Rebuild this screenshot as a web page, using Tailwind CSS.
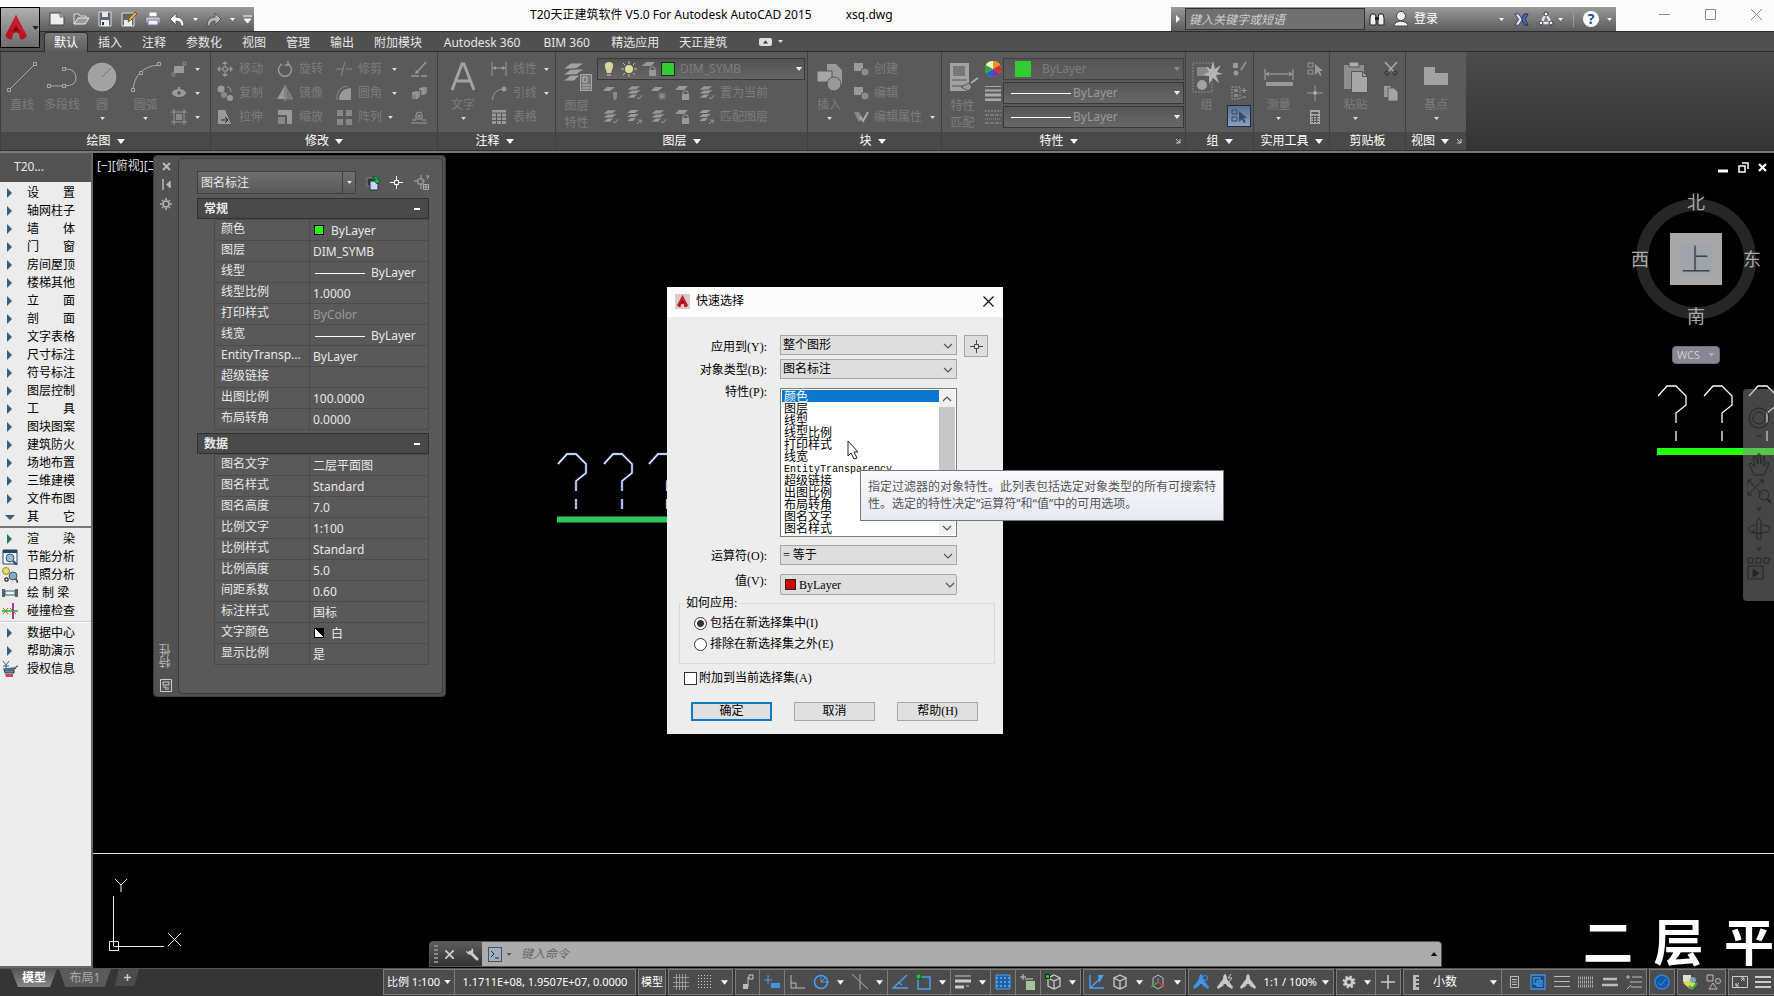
<!DOCTYPE html>
<html lang="zh-CN">
<head>
    <meta charset="UTF-8">
    <meta name="viewport" content="width=device-width, initial-scale=1.0">
    <title>T20天正建筑软件 V5.0 For Autodesk AutoCAD 2015</title>
    <script src="https://cdn.jsdelivr.net/npm/@tailwindcss/browser@4"></script>
</head>
<body class="flex flex-col h-screen overflow-hidden bg-black font-['Noto_Sans','Noto_Sans_CJK_SC',sans-serif] text-xs leading-4 text-[#e6e6e6] whitespace-nowrap">
    <!-- Shared icons -->
    <svg class="hidden">
        <symbol id="dn" viewBox="0 0 8 5"><path d="M0 0h8L4 5z" fill="currentColor"/></symbol>
        <symbol id="logo" viewBox="0 0 24 26"><path d="M12 0 1 21q5 5 7 3l1-5q3-3 6 0l1 5q3 2 7-3z" fill="#b81420"/><path d="M12 0 6 15l6-5 10 11z" fill="#c82028"/><path d="M12 11l-3 6q3-2 6 0z" fill="#6e0a10"/></symbol>
        <symbol id="chev" viewBox="0 0 10 6"><path d="M1 1l4 4 4-4" fill="none" stroke="#555" stroke-width="1.2"/></symbol>
        <symbol id="new" viewBox="0 0 16 16"><path d="M1 2h10l4 4v8H1z" fill="#eee" stroke="#444"/><path d="M11 2v4h4" fill="#bbb" stroke="#666"/></symbol>
        <symbol id="open" viewBox="0 0 16 16"><path d="M1 13V3h5l1 2h6v2" fill="#777" stroke="#ddd"/><path d="M1 13 5 7h11l-4 6z" fill="#999" stroke="#eee"/></symbol>
        <symbol id="save" viewBox="0 0 16 16"><path d="M2 1h12v14H2z" fill="#5c6470" stroke="#ddd"/><path d="M5 1h6v5H5z" fill="#e6e6e6"/><path d="M4 9h8v6H4z" fill="#eee"/><path d="M5 11h2v3H5z" fill="#333"/></symbol>
        <symbol id="saveas" viewBox="0 0 16 16"><path d="M1 2h12v13H1z" fill="#666" stroke="#ddd"/><path d="M3 9h8v6H3z" fill="#eee"/><path d="M7 11l1-4 6-6 2 2-6 6z" fill="#e5a93c" stroke="#553a10" stroke-width=".7"/></symbol>
        <symbol id="print" viewBox="0 0 16 16"><path d="M4 1h8v5H4z" fill="#fff" stroke="#888"/><path d="M1 6h14v6H1z" fill="#ccd" stroke="#777"/><path d="M3 9h10v5H3z" fill="#eef" stroke="#779"/></symbol>
        <symbol id="undo" viewBox="0 0 16 16"><path d="M7 2v4q8 0 8 9h-3q0-5-5-5v4L1 8z" fill="currentColor" stroke="#444" stroke-width=".8"/></symbol>
        <symbol id="rect" viewBox="0 0 16 16"><path d="M3 5h10v7H3z" fill="#999"/><path d="M12 1h3v3h-3zM1 12h3v3H1z" fill="none" stroke="#888"/></symbol>
        <symbol id="ellipse" viewBox="0 0 16 16"><ellipse cx="8" cy="8" rx="7" ry="4" fill="#999"/><path d="M8 6v4M6 8h4" stroke="#444"/><path d="M7 2h2v2H7z" fill="#999"/></symbol>
        <symbol id="hatch" viewBox="0 0 16 16"><path d="M5 5h6v6H5z" fill="#888"/><path d="M3 0v16M13 0v16M0 3h16M0 13h16" stroke="#999"/></symbol>
        <symbol id="move" viewBox="0 0 16 16"><path d="M8 0l3 3H5zM8 16l3-3H5zM0 8l3-3v6zM16 8l-3-3v6z" fill="#999"/><path d="M8 3v3M8 10v3M3 8h3M10 8h3M6 6h4v4H6z" stroke="#999" fill="none"/></symbol>
        <symbol id="copy" viewBox="0 0 16 16"><circle cx="4" cy="4" r="3.5" fill="#999"/><circle cx="7" cy="10" r="3" fill="#888"/><circle cx="13" cy="13" r="3" fill="#999"/><path d="M10 2q4 0 4 5" stroke="#999" fill="none"/></symbol>
        <symbol id="stretch" viewBox="0 0 16 16"><path d="M1 1h7l6 14H1z" fill="#999"/><path d="M4 11h7M8 8l3 3-3 3" stroke="#222" fill="none"/></symbol>
        <symbol id="rotate" viewBox="0 0 16 16"><path d="M5 3a6.500 6.500 0 1 0 6 0M11 0v4H8" stroke="#999" stroke-width="1.500" fill="none"/></symbol>
        <symbol id="mirror" viewBox="0 0 16 16"><path d="M7 2v12H0z" fill="#999"/><path d="M9 2v12h7z" fill="#777" stroke="#999" stroke-width=".5"/><path d="M8 0v16" stroke="#aaa"/></symbol>
        <symbol id="scale" viewBox="0 0 16 16"><path d="M1 1h14v14h-5V6H1z" fill="#999"/><path d="M1 8h7v7H1z" fill="#888"/></symbol>
        <symbol id="trim" viewBox="0 0 16 16"><path d="M0 8h7M10 8h6M9 1 5 15" stroke="#888" fill="none"/></symbol>
        <symbol id="fillet" viewBox="0 0 16 16"><path d="M3 15Q3 4 15 3v12z" fill="#999"/><path d="M1 15Q0 2 12 1" stroke="#888" fill="none"/></symbol>
        <symbol id="array" viewBox="0 0 16 16"><path d="M1 1h6v6H1zM10 1h6v6h-6zM1 10h6v6H1zM10 10h6v6h-6z" fill="#888"/></symbol>
        <symbol id="pencil" viewBox="0 0 16 16"><path d="M0 15h8M10 15h6M15 1 6 11" stroke="#999" stroke-width="1.500"/><path d="M4 13l1-4 3 3z" fill="#999"/></symbol>
        <symbol id="cubes" viewBox="0 0 16 16"><path d="M1 8l3-2h5v6l-3 2H1zM8 4l3-2h5v6l-3 2h-3V6z" fill="#888"/><path d="M1 8h5v6M8 4h5v6" stroke="#bbb" stroke-width=".6" fill="none"/></symbol>
        <symbol id="offset" viewBox="0 0 16 16"><path d="M0 14h16M1 11h4V6a3 3 0 0 1 6 0v5h4M7 11V6h2v5" stroke="#999" fill="none"/></symbol>
        <symbol id="dim" viewBox="0 0 16 16"><path d="M1 1v14M15 1v14M2 7h12" stroke="#999"/><path d="M1 7l4-2v4zM15 7l-4-2v4z" fill="#999"/></symbol>
        <symbol id="leader" viewBox="0 0 16 16"><path d="M1 15Q3 5 11 4" stroke="#999" fill="none"/><circle cx="13" cy="4" r="2.500" fill="#999"/></symbol>
        <symbol id="grid" viewBox="0 0 16 16"><path d="M1 1h14v14H1z" fill="#999"/><path d="M1 4h14M1 8h14M1 11.500h14M5.500 4v11M10.500 4v11" stroke="#555"/></symbol>
        <symbol id="lay" viewBox="0 0 16 16"><path d="M6 1h9l-5 4H1zM6 5h9l-5 4H1zM6 9h6l-4 4H1z" fill="#9a9a9a" stroke="#555" stroke-width=".6"/><path d="M11 12l2 2 3-4" stroke="#999" fill="none"/></symbol>
        <symbol id="layx" viewBox="0 0 16 16"><path d="M5 1h8L9 4H1zM5 5h8L9 8H1zM5 9h5l-3 3H1z" fill="#9a9a9a"/><path d="M11 15l4-4M12 11h3v3" stroke="#999" fill="none"/></symbol>
        <symbol id="lay1" viewBox="0 0 16 16"><path d="M5 2h8L8 6H1z" fill="#999"/><path d="M11 7h4v4l-1 4h-2l-1-4z" fill="#8a8a8a"/></symbol>
        <symbol id="frz" viewBox="0 0 16 16"><path d="M5 2h8L8 6H1z" fill="#999"/><path d="M12 7v8M8 11h8M9 8l6 6M15 8l-6 6" stroke="#999"/></symbol>
        <symbol id="lock" viewBox="0 0 16 16"><path d="M5 1h9l-4 4H1z" fill="#999"/><path d="M8 9h7v6H8z" fill="#999"/><path d="M9 9V7q2-3 5 0v2" stroke="#999" fill="none"/></symbol>
        <symbol id="blk" viewBox="0 0 16 16"><path d="M1 2h9v8H1z" fill="#999"/><circle cx="12" cy="11" r="4" fill="#8c8c8c" stroke="#5a5a5a"/></symbol>
        <symbol id="tag" viewBox="0 0 16 16"><path d="M1 3h5l4 6-4 4z" fill="#888"/><path d="M7 8l3 4 5-9" stroke="#aaa" stroke-width="2" fill="none"/></symbol>
        <symbol id="lines" viewBox="0 0 16 16"><path d="M0 1.500h16" stroke="#aaa"/><path d="M0 5.500h16" stroke="#aaa" stroke-width="2"/><path d="M0 10h16" stroke="#aaa" stroke-width="3"/><path d="M0 15h16" stroke="#aaa" stroke-width="3"/></symbol>
        <symbol id="dashes" viewBox="0 0 16 16"><path d="M0 2h16" stroke="#999" stroke-dasharray="2 1"/><path d="M0 6h16M0 14h16" stroke="#999" stroke-dasharray="4 1"/><path d="M0 10h16" stroke="#999" stroke-dasharray="1 1"/></symbol>
        <symbol id="wheel" viewBox="0 0 16 16"><circle cx="8" cy="8" r="8" fill="#e8e080"/><path d="M8 8V0a8 8 0 0 1 7 4z" fill="#f09030"/><path d="M8 8l7-4a8 8 0 0 1 0 8z" fill="#d83020"/><path d="M8 8l7 4a8 8 0 0 1-7 4z" fill="#8030a0"/><path d="M8 8v8a8 8 0 0 1-7-4z" fill="#2060d0"/><path d="M8 8l-7 4a8 8 0 0 1 0-8z" fill="#30a040"/><path d="M8 8 1 4a8 8 0 0 1 7-4z" fill="#f4f4c0"/></symbol>
        <symbol id="gsel" viewBox="0 0 16 16"><path d="M1 2h5v4H1zM1 9h5v4H1z" fill="none" stroke="currentColor"/><path d="M8 3v11l3-3 2 4 1.500-1-2-4H16z" fill="currentColor"/></symbol>
        <symbol id="gedit" viewBox="0 0 16 16"><path d="M2 2h5v5H2z" fill="#999"/><circle cx="5" cy="12" r="2.500" fill="#999"/><path d="M15 1l-5 8" stroke="#999" stroke-width="1.500"/></symbol>
        <symbol id="cross" viewBox="0 0 16 16"><path d="M8 0v5M8 11v5M0 8h5M11 8h5M5.500 5.500h5v5h-5z" stroke="currentColor" fill="none" stroke-width="1.200"/></symbol>
        <symbol id="calc" viewBox="0 0 16 16"><path d="M3 1h10v14H3z" fill="#aaa"/><path d="M4.500 3h7v2h-7z" fill="#555"/><path d="M4 7.500h8M4 10h8M4 12.500h8M6.500 6v8M9.500 6v8" stroke="#555"/></symbol>
        <symbol id="cut" viewBox="0 0 16 16"><path d="M2 1l9 10M14 1 5 11" stroke="#aaa" stroke-width="1.500"/><circle cx="4" cy="12" r="2" fill="none" stroke="#333"/><circle cx="12" cy="12" r="2" fill="none" stroke="#333"/></symbol>
        <symbol id="pages" viewBox="0 0 16 16"><path d="M1 1h7v11H1z" fill="#999"/><path d="M5 3h6l4 4v9H5z" fill="#a4a4a4" stroke="#555" stroke-width=".8"/></symbol>
        <symbol id="launch" viewBox="0 0 6 6"><path d="M1 1l4 4M5 1v4H1" stroke="#ccc" fill="none"/></symbol>
        <symbol id="anno" viewBox="0 0 16 16"><path d="M8 0q2 1 2 5l6 8-1 2-5-3-1-2H7l-1 2-5 3-1-2 6-8q0-4 2-5z" fill="currentColor"/></symbol>
        <symbol id="cube" viewBox="0 0 16 16"><path d="M8 1l6 3v8l-6 3-6-3V4zM2 4l6 3 6-3M8 7v8" fill="none" stroke="currentColor" stroke-width="1.300"/></symbol>
    </svg>

    <!-- Title bar -->
    <header class="relative flex h-[31px] shrink-0 justify-between bg-[#fcfcfc] text-black">
        <button aria-label="应用程序菜单" class="absolute left-0 top-[7px] z-10 flex h-[41px] w-10 items-center gap-1 border border-black bg-linear-to-b from-[#b0b0b0] to-[#6d6d6d] pl-[3px]">
            <svg class="h-[26px] w-6"><use href="#logo"/></svg>
            <svg class="h-1 w-[7px] shrink-0 text-[#222]"><use href="#dn"/></svg>
        </button>
        <div class="mt-[7px] ml-10 flex h-6 w-[214px] items-center gap-2 bg-linear-to-b from-[#9a9a9a] to-[#5c5c5c] pl-[9px] text-white">
            <button aria-label="新建"><svg class="size-4"><use href="#new"/></svg></button>
            <button aria-label="打开"><svg class="size-4"><use href="#open"/></svg></button>
            <button aria-label="保存"><svg class="size-4"><use href="#save"/></svg></button>
            <button aria-label="另存为"><svg class="size-4"><use href="#saveas"/></svg></button>
            <button aria-label="打印"><svg class="size-4"><use href="#print"/></svg></button>
            <button aria-label="放弃" class="flex items-center gap-2"><svg class="size-4"><use href="#undo"/></svg><svg class="h-[3px] w-[5px]"><use href="#dn"/></svg></button>
            <button aria-label="重做" class="flex items-center gap-2"><svg class="size-4 -scale-x-100 text-[#b5b5b5]"><use href="#undo"/></svg><svg class="h-[3px] w-[5px]"><use href="#dn"/></svg></button>
            <button aria-label="自定义"><svg class="h-2 w-[9px]" viewBox="0 0 9 8"><path d="M0 1h9M1 4h7l-3.500 4z" stroke="#fff" fill="#fff"/></svg></button>
        </div>
        <h1 class="absolute left-[530px] top-[7px] flex gap-[34px]"><span>T20天正建筑软件 V5.0 For Autodesk AutoCAD 2015</span><span>xsq.dwg</span></h1>
        <div class="flex">
            <div class="mt-[7px] flex h-6 w-[445px] items-center bg-linear-to-b from-[#9a9a9a] to-[#5c5c5c] text-white">
                <button aria-label="展开" class="flex w-[14px] justify-center"><svg class="h-2 w-1" viewBox="0 0 4 8"><path d="M0 0l4 4-4 4z" fill="#fff"/></svg></button>
                <input aria-label="搜索" placeholder="键入关键字或短语" class="h-[22px] w-[180px] border border-[#333] bg-[#707070] px-[3px] italic placeholder:text-[#cfcfcf]">
                <button aria-label="查找" class="ml-1"><svg class="size-4" viewBox="0 0 16 16"><path d="M2 3h4l1 3v8H1V7zM10 3h4l1 4v7H9V6z" fill="#eee" stroke="#222"/><path d="M6 6h4v3H6z" fill="#222"/></svg></button>
                <button class="ml-2 flex items-center gap-[5px]"><svg class="size-4" viewBox="0 0 16 16"><circle cx="8" cy="5" r="4.500" fill="#f4f4f4" stroke="#444"/><path d="M1 15q0-4 7-5 7 1 7 5z" fill="#f4f4f4" stroke="#444"/></svg>登录</button>
                <svg class="ml-[61px] h-[3px] w-[5px]"><use href="#dn"/></svg>
                <button aria-label="Exchange" class="ml-[10px]"><svg class="size-[15px]" viewBox="0 0 16 16"><path d="M1 2h4l4 6-4 6H1l4-6z" fill="#e8e8f4" stroke="#223a78"/><path d="M15 2h-4L8 7l1 2 2 5h4l-3-6z" fill="#4a68b0" stroke="#1c2c60"/></svg></button>
                <button aria-label="Autodesk 360" class="ml-[9px] flex items-center gap-1"><svg class="size-4" viewBox="0 0 16 16"><path d="M8 3l5 9H3z" fill="none" stroke="#dfe4f4" stroke-width="2.500"/><circle cx="8" cy="3" r="2" fill="#fff" stroke="#234"/><circle cx="3" cy="12" r="2" fill="#fff" stroke="#234"/><circle cx="13" cy="12" r="2" fill="#fff" stroke="#234"/></svg><svg class="h-[3px] w-[5px]"><use href="#dn"/></svg></button>
                <span class="ml-[10px] h-4 w-px bg-[#999]"></span>
                <button aria-label="帮助" class="ml-[9px] flex items-center gap-2"><span class="flex size-4 items-center justify-center rounded-full bg-white text-sm font-bold leading-4 text-[#23479a]">?</span><svg class="h-[3px] w-[5px]"><use href="#dn"/></svg></button>
            </div>
            <div class="flex h-7 items-center gap-[35px] pl-[43px] pr-3">
                <button aria-label="最小化"><svg class="size-[11px]" viewBox="0 0 11 11"><path d="M0 5.500h11" stroke="#888"/></svg></button>
                <button aria-label="最大化"><svg class="size-[11px]" viewBox="0 0 11 11"><path d="M.5.5h10v10H.5z" stroke="#888" fill="none"/></svg></button>
                <button aria-label="关闭"><svg class="size-[11px]" viewBox="0 0 11 11"><path d="M0 0l11 11M11 0 0 11" stroke="#888"/></svg></button>
            </div>
        </div>
    </header>

    <!-- Ribbon tabs -->
    <nav class="flex h-[21px] shrink-0 items-stretch border-y border-[#2c2c2c] bg-[#505050] pl-11 leading-[21px]">
        <a href="#" class="-mb-px rounded-t-sm border border-b-0 border-[#2c2c2c] bg-linear-to-b from-[#7c7c7c] to-[#5c5c5c] px-[9px] leading-[19px] text-white">默认</a>
        <a href="#" class="px-[10px]">插入</a>
        <a href="#" class="px-[10px]">注释</a>
        <a href="#" class="px-[10px]">参数化</a>
        <a href="#" class="px-[10px]">视图</a>
        <a href="#" class="px-[10px]">管理</a>
        <a href="#" class="px-[10px]">输出</a>
        <a href="#" class="px-[10px]">附加模块</a>
        <a href="#" class="w-[100px] text-center">Autodesk 360</a>
        <a href="#" class="w-[69px] text-center">BIM 360</a>
        <a href="#" class="px-[10px]">精选应用</a>
        <a href="#" class="px-[10px]">天正建筑</a>
        <button aria-label="最小化功能区" class="ml-[22px] flex items-center gap-[6px]"><svg class="h-2 w-[13px]" viewBox="0 0 13 8"><rect width="13" height="8" rx="2" fill="#ddd"/><path d="M4 5.500h5L6.500 2.500z" fill="#333"/></svg><svg class="h-[3px] w-[5px]"><use href="#dn"/></svg></button>
    </nav>

    <!-- Ribbon panels -->
    <section class="flex h-[98px] shrink-0 bg-linear-to-b from-[#4c4c4c] to-[#343434] text-[#7c7c7c]">
        <div class="flex w-[211px] flex-col border-x border-[#404040] bg-[#5a5a5a]">
            <div class="flex flex-1 pt-[5px] pl-[3px]">
                <button class="flex w-9 flex-col items-center"><svg class="my-1 size-8" viewBox="0 0 32 32"><path d="M4 28 28 4" stroke="#aaa"/><path d="M1.500 27.500h3v3h-3zM27.500 1.500h3v3h-3z" stroke="#aaa" fill="none"/></svg>直线</button>
                <button class="flex w-11 flex-col items-center"><svg class="my-1 size-8" viewBox="0 0 32 32"><path d="M4 25h14q13 0 12-9Q29 8 20 8" stroke="#aaa" fill="none"/><path d="M1.500 23.500h3v3h-3zM16.500 23.500h3v3h-3zM16.500 6.500h3v3h-3z" stroke="#aaa" fill="#5a5a5a"/></svg>多段线</button>
                <button class="flex w-9 flex-col items-center"><svg class="my-1 size-8" viewBox="0 0 32 32"><circle cx="16" cy="16" r="14" fill="#a2a2a2" stroke="#bbb" stroke-width=".5"/><path d="M16 16l9-9" stroke="#777"/></svg>圆<svg class="mt-1 h-[3px] w-[5px] text-[#ddd]"><use href="#dn"/></svg></button>
                <button class="flex w-[51px] flex-col items-center"><svg class="my-1 size-8" viewBox="0 0 32 32"><path d="M3 29Q5 6 29 4" stroke="#aaa" fill="none"/><path d="M1.500 27.500h3v3h-3zM9.500 10.500h3v3h-3zM27.500 1.500h3v3h-3z" stroke="#aaa" fill="#5a5a5a"/></svg>圆弧<svg class="mt-1 h-[3px] w-[5px] text-[#ddd]"><use href="#dn"/></svg></button>
                <div class="flex flex-col text-[#ddd]">
                    <button aria-label="矩形" class="flex h-6 items-center gap-2"><svg class="size-4"><use href="#rect"/></svg><svg class="h-[3px] w-[5px]"><use href="#dn"/></svg></button>
                    <button aria-label="椭圆" class="flex h-6 items-center gap-2"><svg class="size-4"><use href="#ellipse"/></svg><svg class="h-[3px] w-[5px]"><use href="#dn"/></svg></button>
                    <button aria-label="图案填充" class="flex h-6 items-center gap-2"><svg class="size-4"><use href="#hatch"/></svg><svg class="h-[3px] w-[5px]"><use href="#dn"/></svg></button>
                </div>
            </div>
            <button class="flex h-[18px] items-center justify-center gap-[6px] bg-[#494949] text-white">绘图 <svg class="h-[5px] w-2"><use href="#dn"/></svg></button>
        </div>
        <div class="flex w-[227px] flex-col border-r border-[#404040] bg-[#5a5a5a]">
            <div class="grid flex-1 auto-rows-[24px] grid-cols-[60px_59px_51px_24px_16px] pt-[5px] pl-[6px]">
                <button class="flex items-center gap-[6px]"><svg class="size-4"><use href="#move"/></svg>移动</button>
                <button class="flex items-center gap-[6px]"><svg class="size-4"><use href="#rotate"/></svg>旋转</button>
                <button class="flex items-center gap-[6px]"><svg class="size-4"><use href="#trim"/></svg>修剪</button>
                <button aria-label="更多修剪" class="flex items-center pl-[5px] text-[#ddd]"><svg class="h-[3px] w-[5px]"><use href="#dn"/></svg></button>
                <button aria-label="删除"><svg class="size-4"><use href="#pencil"/></svg></button>
                <button class="flex items-center gap-[6px]"><svg class="size-4"><use href="#copy"/></svg>复制</button>
                <button class="flex items-center gap-[6px]"><svg class="size-4"><use href="#mirror"/></svg>镜像</button>
                <button class="flex items-center gap-[6px]"><svg class="size-4"><use href="#fillet"/></svg>圆角</button>
                <button aria-label="更多圆角" class="flex items-center pl-[5px] text-[#ddd]"><svg class="h-[3px] w-[5px]"><use href="#dn"/></svg></button>
                <button aria-label="分解"><svg class="size-4"><use href="#cubes"/></svg></button>
                <button class="flex items-center gap-[6px]"><svg class="size-4"><use href="#stretch"/></svg>拉伸</button>
                <button class="flex items-center gap-[6px]"><svg class="size-4"><use href="#scale"/></svg>缩放</button>
                <button class="flex items-center gap-[6px]"><svg class="size-4"><use href="#array"/></svg>阵列</button>
                <button aria-label="更多阵列" class="flex items-center pl-[1px] text-[#ddd]"><svg class="h-[3px] w-[5px]"><use href="#dn"/></svg></button>
                <button aria-label="偏移"><svg class="size-4"><use href="#offset"/></svg></button>
            </div>
            <button class="flex h-[18px] items-center justify-center gap-[6px] bg-[#494949] text-white">修改 <svg class="h-[5px] w-2"><use href="#dn"/></svg></button>
        </div>
        <div class="flex w-[118px] flex-col border-r border-[#404040] bg-[#5a5a5a]">
            <div class="flex flex-1 pt-[5px]">
                <button class="flex w-[50px] flex-col items-center"><svg class="my-1 size-8" viewBox="0 0 32 32"><path d="M5 29 15 3h2l10 26M9 20h14" fill="none" stroke="#a2a2a2" stroke-width="3"/></svg>文字<svg class="mt-1 h-[3px] w-[5px] text-[#ddd]"><use href="#dn"/></svg></button>
                <div class="grid auto-rows-[24px] grid-cols-[53px_8px] pl-[3px]">
                    <button class="flex items-center gap-[6px]"><svg class="size-4"><use href="#dim"/></svg>线性</button>
                    <button aria-label="更多标注" class="text-[#ddd]"><svg class="h-[3px] w-[5px]"><use href="#dn"/></svg></button>
                    <button class="flex items-center gap-[6px]"><svg class="size-4"><use href="#leader"/></svg>引线</button>
                    <button aria-label="更多引线" class="text-[#ddd]"><svg class="h-[3px] w-[5px]"><use href="#dn"/></svg></button>
                    <button class="flex items-center gap-[6px]"><svg class="size-4"><use href="#grid"/></svg>表格</button>
                </div>
            </div>
            <button class="flex h-[18px] items-center justify-center gap-[6px] bg-[#494949] pr-1 text-white">注释 <svg class="h-[5px] w-2"><use href="#dn"/></svg></button>
        </div>
        <div class="flex w-[252px] flex-col border-r border-[#404040] bg-[#5a5a5a]">
            <div class="flex flex-1 pt-[5px]">
                <button class="flex w-[41px] flex-col items-center leading-[17px]"><svg class="my-1 size-8 shrink-0" viewBox="0 0 32 32"><path d="M10 2h13l-8 6H2zM10 8h13l-8 6H2zM10 14h9l-6 6H2z" fill="#a2a2a2" stroke="#555" stroke-width=".8"/><path d="M19.500 13.500h11v16h-11z" fill="#777" stroke="#aaa"/><path d="M22 16h4v5h-4zM21 24h8M21 27h8" stroke="#bbb" fill="none"/></svg>图层<br>特性</button>
                <div class="flex flex-col">
                    <div class="relative mt-[1px] mb-[1px] flex h-[22px] w-[208px] items-center">
                        <select aria-label="图层" class="h-full w-full appearance-none border border-[#383838] bg-linear-to-b from-[#525252] to-[#666] pl-[82px] text-[#7d7d7d]"><option>DIM_SYMB</option></select>
                        <div class="pointer-events-none absolute inset-0 flex items-center gap-1 pl-1">
                            <svg class="size-4" viewBox="0 0 16 16"><path d="M8 1q5 0 4 5l-2 6H6L4 6q-1-5 4-5z" fill="#d8d49a"/><path d="M6 13h4v2H6z" fill="#999"/></svg>
                            <svg class="size-4" viewBox="0 0 16 16"><circle cx="8" cy="8" r="4" fill="#e0dca0"/><path d="M8 0v3M8 13v3M0 8h3M13 8h3M2 2l2 2M12 12l2 2M2 14l2-2M12 4l2-2" stroke="#c8c490"/></svg>
                            <svg class="size-4"><use href="#lock"/></svg>
                            <span class="size-[14px] border border-[#222] bg-[#32cd32]"></span>
                            <svg class="mr-[2px] ml-auto h-1 w-2 text-[#eee]"><use href="#dn"/></svg>
                        </div>
                    </div>
                    <div class="flex h-6 items-center gap-2 pl-[5px]">
                        <button aria-label="关闭图层"><svg class="size-4"><use href="#lay1"/></svg></button>
                        <button aria-label="隔离"><svg class="size-4"><use href="#lay"/></svg></button>
                        <button aria-label="冻结"><svg class="size-4"><use href="#frz"/></svg></button>
                        <button aria-label="锁定"><svg class="size-4"><use href="#lock"/></svg></button>
                        <button class="flex items-center gap-[6px]"><svg class="size-4"><use href="#lay"/></svg>置为当前</button>
                    </div>
                    <div class="flex h-6 items-center gap-2 pl-[5px]">
                        <button aria-label="打开所有图层"><svg class="size-4"><use href="#lay"/></svg></button>
                        <button aria-label="取消隔离"><svg class="size-4"><use href="#layx"/></svg></button>
                        <button aria-label="解冻"><svg class="size-4"><use href="#lay"/></svg></button>
                        <button aria-label="解锁"><svg class="size-4"><use href="#lock"/></svg></button>
                        <button class="flex items-center gap-[6px]"><svg class="size-4"><use href="#layx"/></svg>匹配图层</button>
                    </div>
                </div>
            </div>
            <button class="flex h-[18px] items-center justify-center gap-[6px] bg-[#494949] text-white">图层 <svg class="h-[5px] w-2"><use href="#dn"/></svg></button>
        </div>
        <div class="flex w-[134px] flex-col border-r border-[#404040] bg-[#5a5a5a]">
            <div class="flex flex-1 pt-[5px]">
                <button class="flex w-[42px] flex-col items-center"><svg class="my-1 size-8" viewBox="0 0 32 32"><path d="M14 3h9l6 6v14H14z" fill="#999"/><path d="M4 10h15v11H4z" fill="#a6a6a6" stroke="#5a5a5a"/><circle cx="21" cy="23" r="7" fill="#999" stroke="#555"/></svg>插入<svg class="mt-1 h-[3px] w-[5px] text-[#ddd]"><use href="#dn"/></svg></button>
                <div class="flex flex-col pl-[3px]">
                    <button class="flex h-6 items-center gap-[5px]"><svg class="size-4"><use href="#blk"/></svg>创建</button>
                    <button class="flex h-6 items-center gap-[5px]"><svg class="size-4"><use href="#blk"/></svg>编辑</button>
                    <button class="flex h-6 items-center gap-[5px]"><svg class="size-4"><use href="#tag"/></svg>编辑属性 <svg class="ml-[3px] h-[3px] w-[5px] text-[#ddd]"><use href="#dn"/></svg></button>
                </div>
            </div>
            <button class="flex h-[18px] items-center justify-center gap-[6px] bg-[#494949] pr-1 text-white">块 <svg class="h-[5px] w-2"><use href="#dn"/></svg></button>
        </div>
        <div class="flex w-[244px] flex-col border-r border-[#404040] bg-[#5a5a5a]">
            <div class="flex flex-1 pt-[5px]">
                <button class="flex w-[41px] flex-col items-center leading-[17px]"><svg class="my-1 size-8 shrink-0" viewBox="0 0 32 32"><path d="M3 2h19v28H3z" fill="#a2a2a2"/><path d="M6 5h12v10H6z" fill="#777"/><path d="M5 19h15M5 25h15" stroke="#555"/><path d="M14 26l8-4 3 4-4 4z" fill="#999" stroke="#555"/><path d="M24 22l7-5" stroke="#aaa" stroke-width="2"/></svg>特性<br>匹配</button>
                <div class="flex w-5 flex-col items-center">
                    <button aria-label="对象颜色" class="h-6"><svg class="size-4"><use href="#wheel"/></svg></button>
                    <button aria-label="线宽" class="h-6"><svg class="size-4"><use href="#lines"/></svg></button>
                    <button aria-label="线型" class="h-6"><svg class="size-4"><use href="#dashes"/></svg></button>
                </div>
                <div class="flex w-[181px] flex-col gap-[2px] pt-px">
                    <div class="relative h-[22px]">
                        <select aria-label="颜色" class="h-full w-full appearance-none border border-[#404040] bg-linear-to-b from-[#565656] to-[#5e5e5e] pl-[38px] text-[#7d7d7d]"><option>ByLayer</option></select>
                        <div class="pointer-events-none absolute inset-0 flex items-center pr-[3px] pl-3"><span class="size-4 bg-[#32cd32]"></span><svg class="ml-auto h-1 w-2 text-[#888]"><use href="#dn"/></svg></div>
                    </div>
                    <div class="relative h-[22px]">
                        <select aria-label="线宽" class="h-full w-full appearance-none border border-[#383838] bg-linear-to-b from-[#555] to-[#686868] pl-[69px] text-[#999]"><option>ByLayer</option></select>
                        <div class="pointer-events-none absolute inset-0 flex items-center pr-[3px] pl-2"><span class="h-px w-[60px] bg-white"></span><svg class="ml-auto h-1 w-2 text-[#eee]"><use href="#dn"/></svg></div>
                    </div>
                    <div class="relative h-[22px]">
                        <select aria-label="线型" class="h-full w-full appearance-none border border-[#383838] bg-linear-to-b from-[#555] to-[#686868] pl-[69px] text-[#999]"><option>ByLayer</option></select>
                        <div class="pointer-events-none absolute inset-0 flex items-center pr-[3px] pl-2"><span class="h-px w-[60px] bg-white"></span><svg class="ml-auto h-1 w-2 text-[#eee]"><use href="#dn"/></svg></div>
                    </div>
                </div>
            </div>
            <div class="flex h-[18px] items-center bg-[#494949] pr-1 text-white"><button class="flex flex-1 items-center justify-center gap-[6px]">特性 <svg class="h-[5px] w-2"><use href="#dn"/></svg></button><svg class="size-[6px]"><use href="#launch"/></svg></div>
        </div>
        <div class="flex w-[68px] flex-col border-r border-[#404040] bg-[#5a5a5a]">
            <div class="flex flex-1 pt-[5px]">
                <button class="flex w-[41px] flex-col items-center"><svg class="my-1 size-8" viewBox="0 0 32 32"><path d="M2 2h19v29H2z" fill="none" stroke="#888" stroke-dasharray="2 1"/><path d="M6 6h12v9H6z" fill="#888"/><circle cx="11" cy="24" r="5" fill="#a2a2a2"/><path d="M22 0l2 8 6-4-4 7 6 2-7 1 3 8-6-5-4 6 0-8-6-1 6-3-3-5 5 2z" fill="#b5b5b5"/></svg>组</button>
                <div class="flex flex-col">
                    <button aria-label="解除编组" class="flex h-6 w-6 items-center justify-center"><svg class="size-4"><use href="#gedit"/></svg></button>
                    <button aria-label="组编辑" class="flex h-6 w-6 items-center justify-center"><svg class="size-4" viewBox="0 0 16 16"><path d="M1 2h8v12H1z" fill="none" stroke="#999" stroke-dasharray="2 1"/><path d="M3 4h4v3H3zM3 9h4v3H3z" fill="#888"/><path d="M13 3v5M10.500 5.500h5M11 12h4" stroke="#999"/></svg></button>
                    <button aria-label="组选择" class="flex h-[22px] w-6 items-center justify-center border border-[#222c3c] bg-linear-to-b from-[#5a7194] to-[#86a0c8] text-[#39485e]"><svg class="size-4"><use href="#gsel"/></svg></button>
                </div>
            </div>
            <button class="flex h-[18px] items-center justify-center gap-[6px] bg-[#494949] text-white">组 <svg class="h-[5px] w-2"><use href="#dn"/></svg></button>
        </div>
        <div class="flex w-[76px] flex-col border-r border-[#404040] bg-[#5a5a5a]">
            <div class="flex flex-1 pt-[5px]">
                <button class="flex w-[49px] flex-col items-center"><svg class="my-1 size-8" viewBox="0 0 32 32"><path d="M2 8v11M30 8v11M3 13h26M6 11l-3 2 3 2M26 11l3 2-3 2" stroke="#a8a8a8" fill="none"/><path d="M3 23h27" stroke="#999" stroke-width="4"/></svg>测量<svg class="mt-1 h-[3px] w-[5px] text-[#ddd]"><use href="#dn"/></svg></button>
                <div class="flex flex-col pl-1 text-[#999]">
                    <button aria-label="快速选择" class="h-6"><svg class="size-4"><use href="#gsel"/></svg></button>
                    <button aria-label="点坐标" class="h-6"><svg class="size-4" viewBox="0 0 16 16"><path d="M8 0v16M0 8h16" stroke="#999"/><circle cx="8" cy="8" r="2" fill="#aaa"/></svg></button>
                    <button aria-label="计算器" class="h-6"><svg class="size-4"><use href="#calc"/></svg></button>
                </div>
            </div>
            <button class="flex h-[18px] items-center justify-center gap-[6px] bg-[#494949] text-white">实用工具 <svg class="h-[5px] w-2"><use href="#dn"/></svg></button>
        </div>
        <div class="flex w-[76px] flex-col border-r border-[#404040] bg-[#5a5a5a]">
            <div class="flex flex-1 pt-[5px]">
                <button class="flex w-[51px] flex-col items-center"><svg class="my-1 size-8" viewBox="0 0 32 32"><path d="M4 4h20v24H4z" fill="#8e8e8e"/><path d="M9 1h10v5H9z" fill="#aaa" stroke="#555"/><path d="M11.500 10.500h11l5 5v16h-16z" fill="#a6a6a6" stroke="#555"/><path d="M22.500 10.500v5h5" stroke="#555" fill="none"/></svg>粘贴<svg class="mt-1 h-[3px] w-[5px] text-[#ddd]"><use href="#dn"/></svg></button>
                <div class="flex flex-col pl-[2px]">
                    <button aria-label="剪切" class="h-6"><svg class="size-4"><use href="#cut"/></svg></button>
                    <button aria-label="复制" class="h-6"><svg class="size-4"><use href="#pages"/></svg></button>
                </div>
            </div>
            <div class="flex h-[18px] items-center justify-center bg-[#494949] text-white">剪贴板</div>
        </div>
        <div class="flex w-[60px] flex-col bg-[#5a5a5a]">
            <div class="flex flex-1 justify-center pt-[5px]">
                <button class="flex flex-col items-center"><svg class="my-1 size-8" viewBox="0 0 32 32"><path d="M4 6h11v6h13v12H4z" fill="#a2a2a2"/></svg>基点<svg class="mt-1 h-[3px] w-[5px] text-[#ddd]"><use href="#dn"/></svg></button>
            </div>
            <div class="flex h-[18px] items-center bg-[#494949] pr-1 pl-[5px] text-white"><button class="flex flex-1 items-center gap-[6px]">视图 <svg class="h-[5px] w-2"><use href="#dn"/></svg></button><svg class="size-[6px]"><use href="#launch"/></svg></div>
        </div>
    </section>
    <div class="h-[3px] shrink-0 border-t border-[#2e2e2e] bg-[#7a7a7a]"></div>

    <main class="flex min-h-0 flex-1">
        <!-- T20 tool menu -->
        <aside class="flex w-[93px] shrink-0 flex-col border-r-2 border-b-2 border-[#666] bg-[#ececec] text-black">
            <h2 class="h-[29px] bg-[#535353] pl-[14px] leading-[27px] text-[#e6e6e6]">T20...</h2>
            <ul id="menu" class="pt-[2px] text-[#3a5f7c]"></ul>
        </aside>

        <!-- Drawing area -->
        <section class="relative min-w-0 flex-1 overflow-hidden bg-black">
            <p class="absolute left-1 top-[5px] text-[#ddd]">[−][俯视][二维线框]</p>
            <svg class="absolute left-[464px] top-[297px] h-20 w-[160px]" viewBox="0 0 160 80" fill="none">
                <path d="M1 14l9-10h9l10 10v9l-10 8v10M19 49v10M47 14l9-10h9l10 10v9l-10 8v10M65 49v10M92 14l9-10h9l10 10v9l-10 8v10M110 49v10" stroke="#2c5cc8" stroke-width="3" opacity=".6"/>
                <path d="M1 14l9-10h9l10 10v9l-10 8v10M19 49v10M47 14l9-10h9l10 10v9l-10 8v10M65 49v10M92 14l9-10h9l10 10v9l-10 8v10M110 49v10" stroke="#fff" stroke-width="1.300"/>
                <path d="M0 69.500h160" stroke="#30c85c" stroke-width="6"/>
            </svg>
            <svg class="absolute right-0 top-[229px] h-20 w-[117px]" viewBox="0 0 117 80" fill="none">
                <path d="M1 14l9-10h9l10 10v9l-10 8v10M19 49v10M47 14l9-10h9l10 10v9l-10 8v10M65 49v10M92 14l9-10h9l10 10v9l-10 8v10M110 49v10" stroke="#fff" stroke-width="1.300"/>
                <path d="M0 69.500h117" stroke="#22ff11" stroke-width="7"/>
            </svg>
            <div class="absolute right-[7px] top-[9px] flex gap-[9px]">
                <button aria-label="最小化视口"><svg class="size-[11px]" viewBox="0 0 11 11"><path d="M0 9h10" stroke="#fff" stroke-width="3"/></svg></button>
                <button aria-label="还原视口"><svg class="size-[11px]" viewBox="0 0 11 11"><path d="M1 4h6v6H1zM4 1h6v6" stroke="#fff" stroke-width="1.500" fill="none"/></svg></button>
                <button aria-label="关闭视口"><svg class="size-[9px]" viewBox="0 0 9 9"><path d="M1 1l7 7M8 1 1 8" stroke="#fff" stroke-width="2.200"/></svg></button>
            </div>

            <!-- View cube -->
            <div class="absolute right-[10px] top-9 flex w-[136px] flex-col items-center text-lg leading-[26px] text-[#aaa]">
                <div class="relative z-0 grid grid-cols-[24px_1fr_24px] grid-rows-[26px_1fr_26px] h-[140px] w-full items-center justify-items-center">
                    <span class="absolute inset-x-2 inset-y-[10px] -z-10 rounded-full border-[12px] border-[#262626]"></span>
                    <button class="col-start-2">北</button>
                    <button class="col-start-1 row-start-2">西</button>
                    <button class="col-start-2 row-start-2 flex size-[52px] items-center justify-center bg-[#a8a8a8]"><span class="flex size-8 items-center justify-center bg-[#a0a4ac] text-3xl font-light leading-8 text-[#444]">上</span></button>
                    <button class="col-start-3 row-start-2">东</button>
                    <button class="col-start-2 row-start-3">南</button>
                </div>
                <button class="mt-[17px] flex h-[18px] w-12 items-center justify-between rounded-sm border border-[#6c6c78] bg-[#868694] px-1 text-[11px] leading-4 text-[#ccc]">WCS<svg class="h-1 w-[7px] text-[#a4acb8]"><use href="#dn"/></svg></button>
            </div>

            <!-- Navigation bar -->
            <div class="absolute right-0 top-[236px] flex h-[212px] w-[31px] flex-col items-center rounded-l bg-[#8a8a8a]/50 pt-3 text-[#262626]">
                <button aria-label="全导航控制盘"><svg class="h-9 w-6" viewBox="0 0 24 36" fill="none" stroke="currentColor"><circle cx="12" cy="17" r="10"/><circle cx="12" cy="17" r="6"/><path d="M10 35h4l-2 3z"/></svg></button>
                <button aria-label="平移" class="mt-4"><svg class="size-6" viewBox="0 0 24 24" fill="none" stroke="currentColor"><path d="M7 22 2 11l2-1 4 4L6 4l2-1 3 8V1h2l1 10 3-8 1 1-1 9 3-4 2 1-5 12z"/></svg></button>
                <button aria-label="范围缩放"><svg class="h-[34px] w-6" viewBox="0 0 24 34" fill="none" stroke="currentColor"><path d="M1 3l15 15M16 3 1 18M1 7V3h4M12 3h4v4M1 14v4h4"/><circle cx="17" cy="18" r="5"/><path d="M20 22l4 4" stroke-width="2"/><path d="M10 31h4l-2 3z"/></svg></button>
                <button aria-label="动态观察" class="mt-[6px]"><svg class="h-[34px] w-6" viewBox="0 0 24 34" fill="none" stroke="currentColor"><path d="M10 4v18h4V4l-2-3zM4 9q-6 3 0 6 8 3 16 0 6-3 0-6l-4-1M4 9l4-1M8 17l-3-2 3-2"/><path d="M10 31h4l-2 3z"/></svg></button>
                <button aria-label="ShowMotion" class="mt-[6px]"><svg class="h-6 w-6" viewBox="0 0 24 24" fill="none" stroke="currentColor"><path d="M1 1h5v5H1zM9 1h5v5H9zM17 1h5v5h-5zM1 9h15v13H1z"/><path d="M6 12l6 4-6 4z" fill="currentColor"/></svg></button>
            </div>

            <!-- Wall line and UCS icon -->
            <div class="absolute inset-x-0 bottom-[114px] h-px bg-[#e0e0e0]"></div>
            <svg class="absolute bottom-[13px] left-4 h-[76px] w-[76px]" viewBox="0 0 76 76" fill="none" stroke="#eee"><path d="M4.500 67V17M4.500 67.500H55M.5 62.500h9v9h-9z"/><path d="M6 0l6 6 6-6M12 6v7M59 54l13 13M72 54 59 67"/></svg>
            <div class="absolute right-0 bottom-0 flex w-[191px] justify-between text-[50px] font-bold leading-[52px] text-white"><span>二</span><span>层</span><span>平</span></div>

            <!-- Command line -->
            <div class="absolute bottom-[1px] left-[336px] flex h-[26px] w-[1013px] items-center rounded-t-sm border border-[#555] bg-[#acacac]">
                <div class="flex h-full w-[52px] items-center bg-linear-to-b from-[#5c5c5c] to-[#333] pl-1">
                    <span class="h-[18px] w-1 border-x-2 border-dotted border-[#888]"></span>
                    <svg class="ml-[7px] size-[9px]" viewBox="0 0 9 9"><path d="M0 0l9 9M9 0 0 9" stroke="#ccc" stroke-width="1.800"/></svg>
                    <svg class="ml-[11px] size-[14px]" viewBox="0 0 14 14"><path d="M5 5l7 7" stroke="#ccc" stroke-width="3" stroke-linecap="round"/><path d="M1 4a4 4 0 0 0 6 3 4 4 0 0 0 0-6L6 4 4 5 1 4z" fill="#ccc"/></svg>
                </div>
                <svg class="ml-[6px] h-[15px] w-[14px]" viewBox="0 0 14 15"><rect x=".5" y=".5" width="13" height="14" fill="#9fb0bc" stroke="#456"/><path d="M3 4l3 3-3 3M7 11h4" stroke="#234" fill="none"/></svg>
                <svg class="ml-1 h-[3px] w-[6px] text-[#555]"><use href="#dn"/></svg>
                <input aria-label="命令" placeholder="键入命令" class="ml-2 flex-1 px-px italic placeholder:text-[#666]">
                <svg class="mr-[3px] h-1 w-2 rotate-180 text-[#111]"><use href="#dn"/></svg>
            </div>

            <!-- Properties palette -->
            <aside class="absolute left-[60px] top-[2px] flex h-[542px] w-[293px] rounded border border-[#3c3c3c] bg-[#525252] py-[2px] pr-[2px] text-[#e8e8e8]">
                <div class="flex w-6 flex-col items-center pt-1 text-[#b8b8b8]">
                    <button aria-label="关闭"><svg class="size-[9px]" viewBox="0 0 9 9"><path d="M1 1l7 7M8 1 1 8" stroke="currentColor" stroke-width="2"/></svg></button>
                    <button aria-label="自动隐藏" class="mt-2"><svg class="h-[11px] w-[9px]" viewBox="0 0 9 11"><path d="M1 0v11M8 2v7" stroke="currentColor" stroke-width="1.500"/><path d="M8 2v7L4 5.500z" fill="currentColor"/></svg></button>
                    <button aria-label="特性选项" class="mt-2"><svg class="size-3" viewBox="0 0 12 12"><circle cx="6" cy="6" r="3" fill="none" stroke="currentColor" stroke-width="1.500"/><path d="M6 0v2M6 10v2M0 6h2M10 6h2M2 2l1 1M9 9l1 1M10 2 9 3M3 9l-1 1" stroke="currentColor" stroke-width="1.500"/></svg></button>
                    <span class="mt-auto rotate-180 [writing-mode:vertical-rl]">特性</span>
                    <svg class="mt-[11px] mb-[2px] h-[13px] w-3" viewBox="0 0 12 13"><path d="M.5.5h11v12H.5zM3 3h6v3H3zM3 8h3v3M8 8v3" stroke="#ccc" fill="none"/></svg>
                </div>
                <div class="flex-1 rounded border border-[#3c3c3c] bg-[#595959] pt-3 pl-[18px]">
                    <div class="flex items-center">
                        <div class="relative h-[23px] w-[159px]">
                            <select aria-label="对象" class="h-full w-full appearance-none border border-[#404040] bg-linear-to-b from-[#6e6e6e] to-[#595959] px-[3px]"><option>图名标注</option></select>
                            <span class="pointer-events-none absolute inset-y-0 right-0 flex w-[14px] items-center justify-center border border-[#404040]"><svg class="h-[3px] w-[5px]"><use href="#dn"/></svg></span>
                        </div>
                        <button aria-label="切换 PICKADD" class="ml-[10px]"><svg class="size-4" viewBox="0 0 16 16"><path d="M1 3h8v8H1z" fill="#333" stroke="#888"/><path d="M4 6h8v9H4z" fill="#c4d8f4" stroke="#234"/><path d="M6 2q6-2 6 3h3l-4 4-4-4h3q0-2-4-3z" fill="#28b83c" stroke="#063"/></svg></button>
                        <button aria-label="选择对象" class="ml-2 text-white"><svg class="size-[13px]"><use href="#cross" width="13" height="13"/></svg></button>
                        <button aria-label="快速选择" class="ml-[11px] text-[#aaa]"><svg class="size-[15px]" viewBox="0 0 15 15"><path d="M7 0v4M7 9v5M0 6h4M9 6h2M4 4h5v5H4zM12 1h3l-2 3" stroke="currentColor" fill="none"/><path d="M9.500 9.500h5v5h-5zM12 9v6M9 12h6" stroke="currentColor" fill="none"/></svg></button>
                    </div>
                    <div class="mt-1 flex h-[21px] w-[232px] items-center justify-between border border-[#303030] bg-[#494949] pr-2 pl-[6px] font-bold"><h3>常规</h3><span class="h-[2px] w-[6px] bg-white"></span></div>
                    <table class="ml-[17px] w-[215px] border-collapse" id="general"></table>
                    <div class="mt-[3px] flex h-[21px] w-[232px] items-center justify-between border border-[#303030] bg-[#494949] pr-2 pl-[6px] font-bold"><h3>数据</h3><span class="h-[2px] w-[6px] bg-white"></span></div>
                    <table class="ml-[17px] w-[215px] border-collapse" id="data"></table>
                </div>
            </aside>

            <!-- Quick select dialog -->
            <div role="dialog" aria-label="快速选择" class="absolute left-[574px] top-[134px] h-[447px] w-[336px] bg-[#ededed] font-['Liberation_Serif','Noto_Sans_CJK_SC',serif] text-black">
                <div class="flex h-[30px] items-center bg-[#fcfcfc] pr-[9px] pb-[2px] pl-2">
                    <svg class="size-[15px] bg-[#e0c8c8] p-px"><use href="#logo" width="13" height="13"/></svg>
                    <h2 class="ml-[6px]">快速选择</h2>
                    <button aria-label="关闭" class="ml-auto"><svg class="size-[11px]" viewBox="0 0 11 11"><path d="M.5.5l10 10M10.500.5l-10 10" stroke="#111" stroke-width="1.200"/></svg></button>
                </div>
                <form class="flex flex-col px-2 pt-[18px]">
                    <div class="flex h-5">
                        <label for="apply" class="w-[92px] pt-1 text-right">应用到(Y):</label>
                        <div class="relative ml-[13px] h-5 w-[177px]"><select id="apply" class="h-full w-full appearance-none border border-[#a6a6a6] bg-[#dedede] px-[2px]"><option>整个图形</option></select><svg class="pointer-events-none absolute top-2 right-1 h-[6px] w-[10px]"><use href="#chev"/></svg></div>
                        <button type="button" aria-label="选择对象" class="ml-[7px] flex h-[22px] w-6 items-center justify-center border border-[#a6a6a6] bg-[#dedede] text-[#444]"><svg class="size-[13px]"><use href="#cross" width="13" height="13"/></svg></button>
                    </div>
                    <div class="mt-1 flex h-5">
                        <label for="type" class="w-[92px] pt-[3px] text-right">对象类型(B):</label>
                        <div class="relative ml-[13px] h-5 w-[177px]"><select id="type" class="h-full w-full appearance-none border border-[#a6a6a6] bg-[#dedede] px-[2px]"><option>图名标注</option></select><svg class="pointer-events-none absolute top-2 right-1 h-[6px] w-[10px]"><use href="#chev"/></svg></div>
                    </div>
                    <div class="mt-[9px] flex h-[149px]">
                        <label for="props" class="w-[92px] -mt-1 text-right">特性(P):</label>
                        <div class="ml-[13px] flex w-[177px] border border-[#7c7c7c] bg-white p-px">
                            <select id="props" size="12" class="h-full flex-1 appearance-none overflow-hidden bg-white">
                                <option selected class="flex h-3 min-h-0 items-center overflow-visible bg-linear-to-r from-[#0a78d0] to-[#0a78d0] px-[2px] py-0 [-webkit-text-fill-color:white]">颜色</option>
                                <option class="flex h-3 min-h-0 items-center overflow-visible px-[2px] py-0">图层</option>
                                <option class="flex h-3 min-h-0 items-center overflow-visible px-[2px] py-0">线型</option>
                                <option class="flex h-3 min-h-0 items-center overflow-visible px-[2px] py-0">线型比例</option>
                                <option class="flex h-3 min-h-0 items-center overflow-visible px-[2px] py-0">打印样式</option>
                                <option class="flex h-3 min-h-0 items-center overflow-visible px-[2px] py-0">线宽</option>
                                <option class="flex h-3 min-h-0 items-center overflow-visible px-[2px] pt-[2px] pb-0 font-['Liberation_Mono',monospace] text-[10px]">EntityTransparency</option>
                                <option class="flex h-3 min-h-0 items-center overflow-visible px-[2px] py-0">超级链接</option>
                                <option class="flex h-3 min-h-0 items-center overflow-visible px-[2px] py-0">出图比例</option>
                                <option class="flex h-3 min-h-0 items-center overflow-visible px-[2px] py-0">布局转角</option>
                                <option class="flex h-3 min-h-0 items-center overflow-visible px-[2px] py-0">图名文字</option>
                                <option class="flex h-3 min-h-0 items-center overflow-visible px-[2px] py-0">图名样式</option>
                            </select>
                            <div class="flex w-4 flex-col items-center justify-between bg-[#f0f0f0] py-1">
                                <svg class="mt-[2px] h-[6px] w-[10px] rotate-180"><use href="#chev"/></svg>
                                <span class="mt-[5px] mb-10 w-4 flex-1 bg-[#c8c8c8]"></span>
                                <svg class="h-[6px] w-[10px]"><use href="#chev"/></svg>
                            </div>
                        </div>
                    </div>
                    <div class="mt-2 flex h-5">
                        <label for="op" class="w-[92px] pt-[3px] text-right">运算符(O):</label>
                        <div class="relative ml-[13px] h-5 w-[177px]"><select id="op" class="h-full w-full appearance-none border border-[#a6a6a6] bg-[#dedede] px-[2px]"><option>= 等于</option></select><svg class="pointer-events-none absolute top-2 right-1 h-[6px] w-[10px]"><use href="#chev"/></svg></div>
                    </div>
                    <div class="mt-[9px] flex h-[21px]">
                        <label for="val" class="-mt-px w-[92px] text-right">值(V):</label>
                        <div class="relative ml-[13px] h-[21px] w-[177px]"><select id="val" class="h-full w-full appearance-none rounded-xs border border-[#a6a6a6] bg-[#dedede] pl-[18px]"><option>ByLayer</option></select><span class="pointer-events-none absolute top-[5px] left-[5px] size-[11px] border border-[#222] bg-[#d80000]"></span><svg class="pointer-events-none absolute top-2 right-[2px] h-[6px] w-[10px]"><use href="#chev"/></svg></div>
                    </div>
                    <fieldset class="ml-1 flex h-[69px] flex-col gap-[5px] border border-[#dadada] px-[14px]">
                        <legend class="-ml-[10px] px-[2px]">如何应用:</legend>
                        <label class="mt-1 flex items-center gap-[3px]"><input type="radio" name="how" checked class="size-[13px] appearance-none rounded-full border border-[#333] bg-white bg-[radial-gradient(circle,#333_3px,white_4px)]">包括在新选择集中(I)</label>
                        <label class="flex items-center gap-[3px]"><input type="radio" name="how" class="size-[13px] appearance-none rounded-full border border-[#333] bg-white">排除在新选择集之外(E)</label>
                    </fieldset>
                    <label class="mt-[6px] ml-[9px] flex items-center gap-[2px]"><input type="checkbox" class="size-[13px] appearance-none border border-[#333] bg-white">附加到当前选择集(A)</label>
                    <div class="mt-4 ml-4 flex gap-[22px]">
                        <button type="button" class="h-[19px] w-[81px] border-2 border-[#0f7ac8] bg-[#e0e0e0] leading-[15px]">确定</button>
                        <button type="button" class="h-[19px] w-[81px] border border-[#a6a6a6] bg-[#e0e0e0] leading-[17px]">取消</button>
                        <button type="button" class="h-[19px] w-[81px] border border-[#a6a6a6] bg-[#e0e0e0] leading-[17px]">帮助(H)</button>
                    </div>
                </form>
            </div>
            <div role="tooltip" class="absolute left-[767px] top-[317px] h-[51px] w-[364px] border border-[#767676] bg-linear-to-b from-[#fafafc] to-[#e8eaf2] px-[7px] pt-[7px] leading-[17px] text-[#555] whitespace-normal">指定过滤器的对象特性。此列表包括选定对象类型的所有可搜索特性。选定的特性决定“运算符”和“值”中的可用选项。</div>
            <svg class="absolute left-[754px] top-[287px] h-5 w-3" viewBox="0 0 12 20"><path d="M1 1v15l3-3 3 6 3-1-3-6h4z" fill="#fff" stroke="#222"/></svg>
        </section>
    </main>

    <!-- Layout tabs and status bar -->
    <footer class="flex h-7 shrink-0 justify-between border-t border-[#555] bg-[#353535] text-[11px] text-white">
        <div class="flex items-start pl-[11px] text-xs">
            <a href="#" class="flex h-[18px] w-[46px] items-center justify-center bg-linear-to-b from-[#555] to-[#888] font-bold [clip-path:polygon(0_0,100%_0,85%_100%,15%_100%)]">模型</a>
            <a href="#" class="ml-[2px] flex h-[18px] w-[52px] items-center justify-center bg-[#5a5a5a] text-[#aaa] [clip-path:polygon(0_0,100%_0,88%_100%,12%_100%)]">布局1</a>
            <button aria-label="新建布局" class="ml-1 flex h-[17px] w-[24px] items-center justify-center bg-[#4c4c4c] leading-4 [clip-path:polygon(15%_0,100%_0,80%_100%,0_100%)]"><svg class="size-[7px]" viewBox="0 0 7 7"><path d="M3.500 0v7M0 3.500h7" stroke="#ccc" stroke-width="1.500"/></svg></button>
        </div>
        <div class="flex h-[26px] items-stretch gap-[2px] text-[#c8c8c8]">
            <div class="flex border border-[#7c7c7c] bg-[#4c4c4c] text-white">
                <button class="flex w-[71px] items-center justify-center gap-1 border-r border-[#7c7c7c]">比例 1:100 <svg class="h-1 w-[7px]"><use href="#dn"/></svg></button>
                <button class="w-[180px]">1.1711E+08, 1.9507E+07, 0.0000</button>
            </div>
            <button class="w-[28px] border border-[#7c7c7c] bg-[#4c4c4c] text-white">模型</button>
            <div class="flex w-[65px] items-center justify-between border border-[#7c7c7c] bg-[#4c4c4c] px-1">
                <button aria-label="栅格"><svg class="size-4" viewBox="0 0 16 16"><path d="M3.500 0v16M6.500 0v16M9.500 0v16M12.500 0v16M0 3.500h16M0 8.500h16M0 12.500h16" stroke="#aaa" stroke-width=".8"/></svg></button>
                <button aria-label="捕捉"><svg class="size-4" viewBox="0 0 16 16"><path d="M1 1.500h15M1 4.500h15M1 7.500h15M1 10.500h15M1 13.500h15" stroke="#ccc" stroke-dasharray="1 2"/></svg></button>
                <svg class="h-[5px] w-[7px] text-white"><use href="#dn"/></svg>
            </div>
            <div class="flex border border-[#7c7c7c] bg-[#4c4c4c]">
                <button aria-label="推断约束" class="flex w-[24px] items-center justify-center border-r border-[#7c7c7c]"><svg class="size-4" viewBox="0 0 16 16"><path d="M9 1h4v4H9zM8 3v10" stroke="#ccc" fill="none"/><path d="M3 10h5v5H3z" fill="#bbb"/></svg></button>
                <button aria-label="动态输入" class="flex w-[25px] items-center justify-center border-r border-[#7c7c7c]"><svg class="size-4" viewBox="0 0 16 16"><path d="M4 1v9M0 6h8" stroke="#4a9ff0"/><path d="M7 9h9v5H7z" fill="#3d94ee"/></svg></button>
                <div class="flex w-[103px] items-center justify-between border-r border-[#7c7c7c] px-1">
                    <button aria-label="正交"><svg class="size-4" viewBox="0 0 16 16"><path d="M2 1v13h14M2 9h5v5" stroke="#bbb" fill="none"/></svg></button>
                    <button aria-label="极轴"><svg class="size-4" viewBox="0 0 16 16"><circle cx="8" cy="8" r="6.500" stroke="#4a9ff0" stroke-width="1.500" fill="none"/><path d="M8 3v5h8M8 8l5-5" stroke="#4a9ff0" fill="none"/></svg></button>
                    <svg class="h-[5px] w-[7px] text-white"><use href="#dn"/></svg>
                    <button aria-label="等轴测"><svg class="size-4" viewBox="0 0 16 16"><path d="M0 0l16 15M8 0v16" stroke="#aaa"/></svg></button>
                    <svg class="h-[5px] w-[7px] text-white"><use href="#dn"/></svg>
                </div>
                <div class="flex w-[63px] items-center justify-between border-r border-[#7c7c7c] px-1">
                    <button aria-label="对象追踪"><svg class="size-4" viewBox="0 0 16 16"><path d="M15 1 1 14h15M6 8l4 3" stroke="#4a9ff0" stroke-width="1.500" fill="none"/></svg></button>
                    <button aria-label="对象捕捉"><svg class="size-4" viewBox="0 0 16 16"><path d="M2 3h12v12H2z" stroke="#4a9ff0" stroke-width="1.500" fill="none"/><path d="M0 0h5v5H0z" fill="#22c040" stroke="#052"/></svg></button>
                    <svg class="h-[5px] w-[7px] text-white"><use href="#dn"/></svg>
                </div>
                <div class="flex w-10 items-center justify-between border-r border-[#7c7c7c] px-1">
                    <button aria-label="线宽"><svg class="size-4" viewBox="0 0 16 16"><path d="M0 2h16" stroke="#ccc"/><path d="M0 7h16M0 13h9" stroke="#ccc" stroke-width="3"/><path d="M11 12h3" stroke="#ccc"/></svg></button>
                    <svg class="h-[5px] w-[7px] text-white"><use href="#dn"/></svg>
                </div>
                <button aria-label="透明度" class="flex w-[25px] items-center justify-center border-r border-[#7c7c7c]"><svg class="size-4" viewBox="0 0 16 16"><path d="M1 1h14v14H1z" fill="#225fa0" stroke="#4a9ff0"/><path d="M1 4h14M1 8h14M1 12h14" stroke="#4a9ff0" stroke-width="2" stroke-dasharray="2 2"/></svg></button>
                <button aria-label="选择循环" class="flex w-[25px] items-center justify-center border-r border-[#7c7c7c]"><svg class="size-4" viewBox="0 0 16 16"><path d="M3 0v6M0 3h6M5 5h8" stroke="#ccc"/><path d="M6 7h9v9H6z" fill="#a0c890"/></svg></button>
                <div class="flex w-[39px] items-center justify-between px-1">
                    <button aria-label="三维捕捉"><svg class="size-4" viewBox="0 0 16 16"><path d="M9 1l6 3v8l-6 3-6-3V4zM3 4l6 3 6-3M9 7v8" fill="none" stroke="#ccc" stroke-width="1.300"/><path d="M.5.5h4v4h-4z" fill="#22c040" stroke="#020"/></svg></button>
                    <svg class="h-[5px] w-[7px] text-white"><use href="#dn"/></svg>
                </div>
            </div>
            <div class="flex w-[103px] items-center justify-between border border-[#7c7c7c] bg-[#4c4c4c] px-1">
                <button aria-label="动态 UCS"><svg class="size-4" viewBox="0 0 16 16"><path d="M2 1v13h14M2 14 14 3" stroke="#4a9ff0" stroke-width="1.500" fill="none"/><path d="M10 1h6l-5 8z" fill="#4a9ff0"/></svg></button>
                <button aria-label="选择过滤"><svg class="size-4"><use href="#cube"/></svg></button>
                <svg class="h-[5px] w-[7px] text-white"><use href="#dn"/></svg>
                <button aria-label="小控件"><svg class="size-4" viewBox="0 0 16 16"><path d="M8 1l5 3v8l-5 3-5-3V4z" stroke="#bbb" fill="none"/><path d="M8 8V4" stroke="#88e"/><path d="M8 8l7 5" stroke="#e03030" stroke-width="1.500"/><path d="M8 8l-7 5" stroke="#30b030" stroke-width="1.500"/></svg></button>
                <svg class="h-[5px] w-[7px] text-white"><use href="#dn"/></svg>
            </div>
            <div class="flex w-[146px] items-center justify-between border border-[#7c7c7c] bg-[#4c4c4c] px-1">
                <button aria-label="注释可见性" class="text-[#3d94ee]"><svg class="size-4" viewBox="0 0 16 16"><use href="#anno" width="16" height="16"/><circle cx="12" cy="4" r="2.500" fill="none" stroke="currentColor"/></svg></button>
                <button aria-label="自动缩放"><svg class="size-4" viewBox="0 0 16 16"><use href="#anno" width="16" height="16"/><path d="M14 0l-3 4h4l-3 4" stroke="currentColor" fill="none"/></svg></button>
                <button aria-label="注释比例"><svg class="size-4"><use href="#anno"/></svg></button>
                <button class="flex items-center gap-[5px] text-white">1:1 / 100% <svg class="h-[5px] w-[7px]"><use href="#dn"/></svg></button>
            </div>
            <div class="flex w-[65px] items-center border border-[#7c7c7c] bg-[#4c4c4c] pl-1">
                <button aria-label="切换工作空间" class="flex h-full w-[35px] items-center justify-between border-r border-[#7c7c7c] pr-1"><svg class="size-4" viewBox="0 0 16 16"><circle cx="8" cy="8" r="3.500" fill="none" stroke="#ccc" stroke-width="3"/><circle cx="8" cy="8" r="5.500" fill="none" stroke="#ccc" stroke-width="2" stroke-dasharray="2.300 2"/></svg><svg class="h-[5px] w-[7px] text-white"><use href="#dn"/></svg></button>
                <button aria-label="注释监视器" class="flex flex-1 justify-center"><svg class="size-[14px]" viewBox="0 0 14 14"><path d="M7 0v14M0 7h14" stroke="#ccc" stroke-width="1.500"/></svg></button>
            </div>
            <div class="flex w-[244px] items-center border border-[#7c7c7c] bg-[#4c4c4c]">
                <button class="flex h-full w-[98px] items-center border-r border-[#7c7c7c] pl-[9px] text-xs text-white"><svg class="mr-[14px] h-[15px] w-[6px]" viewBox="0 0 6 15"><path d="M0 0h6v2H3v2h3v2H3v2h3v2H3v2h3v3H0z" fill="#bbb"/></svg>小数 <svg class="mr-1 ml-auto h-[5px] w-[7px]"><use href="#dn"/></svg></button>
                <div class="flex flex-1 items-center justify-between px-[4px]">
                    <button aria-label="快捷特性"><svg class="size-4" viewBox="0 0 16 16"><path d="M4.500 2.500h8v11h-8zM6 5.500h5M6 8h5M6 10.500h5" stroke="#bbb" fill="none"/></svg></button>
                    <button aria-label="锁定界面"><svg class="size-4" viewBox="0 0 16 16"><path d="M1 1h14v14H1zM4 4h6v6H4zM7 7h5v5H7z" stroke="#3d94ee" fill="#234a74" stroke-width="1.300"/></svg></button>
                    <button aria-label="线条"><svg class="size-4" viewBox="0 0 16 16"><path d="M0 2.500h16M0 7.500h16M0 12.500h16" stroke="#bbb"/></svg></button>
                    <button aria-label="填充"><svg class="size-4" viewBox="0 0 16 16"><path d="M0 4h16M0 8h16M0 12h16" stroke="#aaa" stroke-width="3" stroke-dasharray="1 1"/></svg></button>
                    <button aria-label="加粗"><svg class="size-4" viewBox="0 0 16 16"><path d="M1 5h14M0 11h16" stroke="#bbb" stroke-width="2.500"/></svg></button>
                    <button aria-label="编辑"><svg class="size-4" viewBox="0 0 16 16"><path d="M6 3h10M4 8h12M5 13h11M2 1v4M0 3h4M1 15l4-4" stroke="#bbb"/></svg></button>
                </div>
            </div>
            <button aria-label="硬件加速" class="flex w-[26px] items-center justify-center border border-[#7c7c7c] bg-[#4c4c4c]"><svg class="size-4" viewBox="0 0 16 16"><circle cx="8" cy="8" r="7" fill="#1458a8" stroke="#2c84e0" stroke-width="1.500"/><path d="M4 9l3 2 5-6" stroke="#3d94ee" fill="none"/></svg></button>
            <div class="flex w-[49px] items-center justify-around border border-[#7c7c7c] bg-[#4c4c4c]">
                <button aria-label="图形状态"><svg class="size-4" viewBox="0 0 16 16"><path d="M1 1h8v7H1z" fill="#ddd"/><path d="M1 9l8-4 5 5-6 5z" fill="#e0d850"/><circle cx="11" cy="6" r="3" fill="#7ab"/><path d="M7 12l3 3 5-6" stroke="#30b040" stroke-width="2" fill="none"/></svg></button>
                <button aria-label="隔离对象"><svg class="size-4" viewBox="0 0 16 16"><path d="M2 1h6v6H2zM8 9l4 6H4z" stroke="#bbb" fill="none"/><circle cx="13" cy="7" r="2.500" stroke="#bbb" fill="none"/></svg></button>
            </div>
            <div class="flex w-[46px] items-center justify-around border border-r-0 border-[#7c7c7c] bg-[#4c4c4c]">
                <button aria-label="全屏显示"><svg class="size-4" viewBox="0 0 16 16"><path d="M.5 2.500h15v11H.5zM9 7l3-3h-3M12 4v3M7 9l-3 3h3M4 12V9" stroke="#ccc" fill="none"/></svg></button>
                <button aria-label="自定义"><svg class="size-4" viewBox="0 0 16 16"><path d="M0 3h16M0 8h16M0 13h16" stroke="#ccc" stroke-width="2"/></svg></button>
            </div>
        </div>
    </footer>

    <script>
        const special = {
            '渲　　染': '<path d="M5 3l5 5-5 5z" fill="#1c7c58"/>',
            '其　　它': '<path d="M3 6h10l-5 5z" fill="currentColor"/>',
            '节能分析': '<path d="M1 1h14v14H1z" fill="#fff" stroke="#246"/><path d="M1 1h14v3H1z" fill="#246"/><circle cx="8" cy="9" r="4" fill="#9bd" stroke="#357"/><path d="M11 12l4 4" stroke="#246" stroke-width="2"/>',
            '日照分析': '<circle cx="4" cy="4" r="3.500" fill="#f0dc50" stroke="#886"/><circle cx="11" cy="9" r="4" fill="#8ab" stroke="#456"/><path d="M3 11h3v3H3z" fill="none" stroke="#000"/><path d="M14 12l2 4" stroke="#456" stroke-width="2"/>',
            '绘 制 梁': '<path d="M1.500 4v8M14.500 4v8" stroke="#566" stroke-width="3"/><path d="M3 6h10v4H3z" fill="#e8f4f4" stroke="#366"/>',
            '碰撞检查': '<path d="M0 8h16" stroke="#4c4" stroke-width="2"/><path d="M11 0v16" stroke="#a3a" stroke-width="2"/><path d="M1 5l5 6M6 5l-5 6M8 5l6 6" stroke="#872"/>',
            '授权信息': '<path d="M1 0l3 4 3-4M4 4v4M1 5h6" stroke="#368" fill="none"/><path d="M1 8h12l2-3h2M2 9h10v3H3z" stroke="#345" fill="#68a"/><path d="M3 13h8v3H4z" fill="#c46"/>'
        };
        const groups = [
            ['设　　置', '轴网柱子', '墙　　体', '门　　窗', '房间屋顶', '楼梯其他', '立　　面', '剖　　面', '文字表格', '尺寸标注', '符号标注', '图层控制', '工　　具', '图块图案', '建筑防火', '场地布置', '三维建模', '文件布图', '其　　它'],
            ['渲　　染', '节能分析', '日照分析', '绘 制 梁', '碰撞检查'],
            ['数据中心', '帮助演示', '授权信息']
        ];
        const arrow = '<path d="M5 3l5 5-5 5z" fill="currentColor"/>';
        const lines = ['<li class="mb-[2px] h-[2px] bg-[#777]"></li>', '<li class="my-[1px] h-[2px] border-t border-[#ccc] bg-white"></li>'];
        document.getElementById('menu').innerHTML = groups.map((items, i) =>
            items.map(name => `<li><button class="flex h-[18px] w-full items-center gap-[9px] pl-[2px]"><svg class="size-4 shrink-0" viewBox="0 0 16 16">${special[name] || arrow}</svg><span class="text-black">${name}</span></button></li>`).join('') + (lines[i] || '')
        ).join('');

        const line = '<span class="mr-[6px] ml-[2px] inline-block h-px w-[50px] bg-white align-middle"></span>';
        const green = '<span class="mr-[7px] ml-px inline-block size-[10px] border border-black bg-[#22ff11]"></span>';
        const bw = '<span class="mr-[7px] ml-px inline-block size-[10px] border border-black bg-[linear-gradient(45deg,white_50%,black_50%)]"></span>';
        const rows = {
            general: [['颜色', green + 'ByLayer'], ['图层', 'DIM_SYMB'], ['线型', line + 'ByLayer'], ['线型比例', '1.0000'], ['打印样式', '<span class="text-[#999]">ByColor</span>'], ['线宽', line + 'ByLayer'], ['EntityTransp...', 'ByLayer'], ['超级链接', ''], ['出图比例', '100.0000'], ['布局转角', '0.0000']],
            data: [['图名文字', '二层平面图'], ['图名样式', 'Standard'], ['图名高度', '7.0'], ['比例文字', '1:100'], ['比例样式', 'Standard'], ['比例高度', '5.0'], ['间距系数', '0.60'], ['标注样式', '国标'], ['文字颜色', bw + '白'], ['显示比例', '是']]
        };
        for (const id in rows) {
            document.getElementById(id).innerHTML = rows[id].map(r =>
                `<tr class="h-[21px] border border-[#4b4b4b]"><th scope="row" class="w-[95px] p-0 pb-[2px] pl-[6px] text-left font-normal">${r[0]}</th><td class="border-l border-[#4b4b4b] p-0 pt-[2px] pl-[3px]">${r[1]}</td></tr>`).join('');
        }
    </script>
</body>
</html>
